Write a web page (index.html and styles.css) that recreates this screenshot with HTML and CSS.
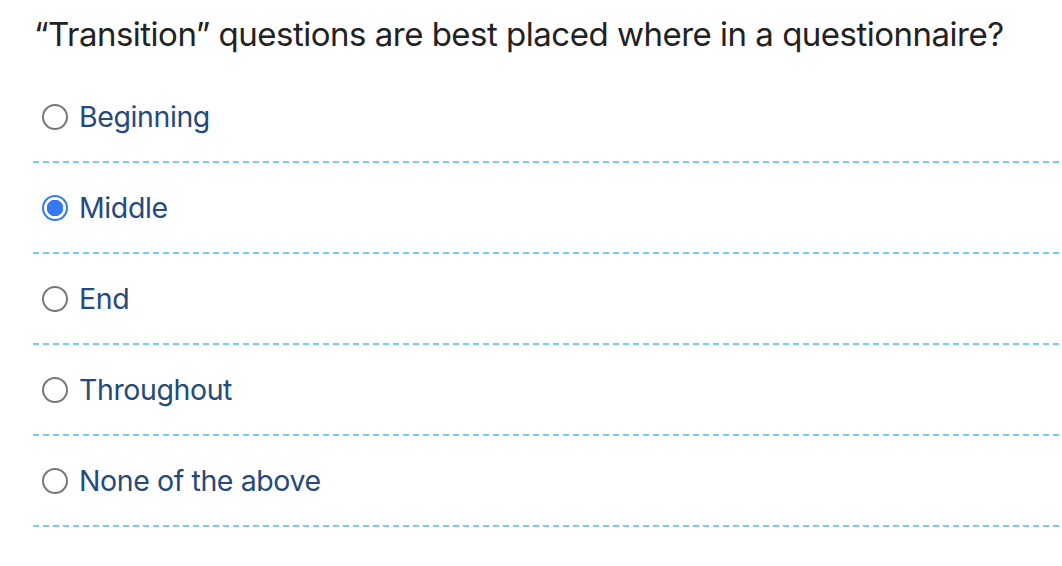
FILE: index.html
```html
<!DOCTYPE html>
<html>
<head>
<meta charset="utf-8">
<link rel="stylesheet" href="styles.css">
</head>
<body>
<div class="quiz">
  <h1 class="question">“Transition” questions are best placed where in a questionnaire?</h1>
  <div class="options">
    <label class="option"><input type="radio" name="q" class="radio"><span class="label">Beginning</span></label>
    <label class="option"><input type="radio" name="q" class="radio" checked><span class="label">Middle</span></label>
    <label class="option"><input type="radio" name="q" class="radio"><span class="label">End</span></label>
    <label class="option"><input type="radio" name="q" class="radio"><span class="label">Throughout</span></label>
    <label class="option"><input type="radio" name="q" class="radio"><span class="label">None of the above</span></label>
  </div>
</div>
</body>
</html>
```
FILE: styles.css
```css
html, body {
  margin: 0;
  padding: 0;
  background: #fff;
}
.quiz {
  font-family: Inter, "Noto Sans", sans-serif;
  padding-left: 32px;
}
.question {
  margin: 0;
  padding: 14px 0 0 2px;
  height: 72px;
  box-sizing: border-box;
  font-size: 33px;
  font-weight: 400;
  line-height: 40px;
  color: #222;
  letter-spacing: -0.5px;
  white-space: nowrap;
}
.options {
  display: flex;
  flex-direction: column;
}
.option {
  display: flex;
  align-items: center;
  gap: 11px;
  height: 91px;
  box-sizing: border-box;
  padding: 0 0 2px 10px;
  background-image: repeating-linear-gradient(to right, #74cbf4 0 6px, transparent 6px 10px);
  background-size: 100% 2px;
  background-repeat: no-repeat;
  background-position: 1px 100%;
  cursor: pointer;
}
.radio {
  appearance: none;
  -webkit-appearance: none;
  margin: 0;
  width: 26px;
  height: 26px;
  border: 2px solid #777;
  border-radius: 50%;
  box-sizing: border-box;
  flex: none;
  background: #fff;
}
.radio:checked {
  border: 2px solid #3478f6;
  background: radial-gradient(circle, #3478f6 0 8px, #fff 8.5px);
}
.label {
  font-size: 28.5px;
  color: #254a7b;
  letter-spacing: -0.4px;
}
```
